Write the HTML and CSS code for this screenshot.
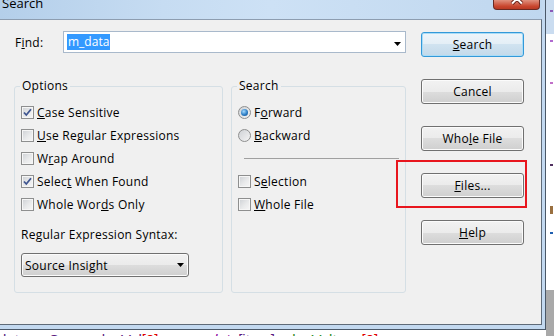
FILE: index.html
```html
<html>

<head>
  <link rel="stylesheet" href="styles.css">
</head>

<body>
  <div class="screen">
    <div class="desk">
      <div class="window">
        <div class="titlebar">
          <span class="title">Search</span>
          <span class="btn-close">
            <svg width="47" height="10" viewBox="0 0 47 10">
              <path d="M19.5 3.5L29.5 -6.5M29.5 3.5L19.5 -6.5" stroke="#6a2218" stroke-width="4" fill="none"></path>
              <path d="M19.5 3.5L29.5 -6.5M29.5 3.5L19.5 -6.5" stroke="#fff" stroke-width="2" fill="none"></path>
            </svg>
          </span>
        </div>
        <div class="client">
          <div class="main">
            <div class="find-row">
              <label class="find-label">F<u>i</u>nd:</label>
              <div class="combo">
                <span class="sel">m_data</span>
                <svg class="arrow" width="7" height="4" viewBox="0 0 7 4"><polygon points="0,0 7,0 3.5,4" fill="#000"></polygon></svg>
              </div>
            </div>
            <div class="groups">
              <fieldset class="group group-options">
                <legend>Options</legend>
                <div class="row">
                  <span class="check"><svg width="11" height="11" viewBox="0 0 11 11"><polyline points="2,5.5 4.3,8 9,2.3" fill="none" stroke="#3f5590" stroke-width="1.8"></polyline></svg></span>
                  <span><u>C</u>ase Sensitive</span>
                </div>
                <div class="row">
                  <span class="check"></span>
                  <span><u>U</u>se Regular Expressions</span>
                </div>
                <div class="row">
                  <span class="check"></span>
                  <span>W<u>r</u>ap Around</span>
                </div>
                <div class="row">
                  <span class="check"><svg width="11" height="11" viewBox="0 0 11 11"><polyline points="2,5.5 4.3,8 9,2.3" fill="none" stroke="#3f5590" stroke-width="1.8"></polyline></svg></span>
                  <span>Selec<u>t</u> When Found</span>
                </div>
                <div class="row">
                  <span class="check"></span>
                  <span>Whole Wor<u>d</u>s Only</span>
                </div>
                <div class="syntax-label">Regular Expression Syntax:</div>
                <div class="select">
                  <span>Source Insight</span>
                  <svg class="arrow" width="7" height="4" viewBox="0 0 7 4"><polygon points="0,0 7,0 3.5,4" fill="#000"></polygon></svg>
                </div>
              </fieldset>
              <fieldset class="group group-search">
                <legend>Search</legend>
                <div class="row">
                  <span class="radio"><span class="dot"></span></span>
                  <span>F<u>o</u>rward</span>
                </div>
                <div class="row">
                  <span class="radio"></span>
                  <span><u>B</u>ackward</span>
                </div>
                <div class="row">
                  <div class="separator"></div>
                </div>
                <div class="row">
                  <span class="check"></span>
                  <span>S<u>e</u>lection</span>
                </div>
                <div class="row">
                  <span class="check"></span>
                  <span><u>W</u>hole File</span>
                </div>
              </fieldset>
            </div>
          </div>
          <div class="buttons">
            <button class="btn default"><u>S</u>earch</button>
            <button class="btn">Cancel</button>
            <button class="btn">Who<u>l</u>e File</button>
            <div class="files-wrap">
              <button class="btn"><u>F</u>iles...</button>
              <div class="mark"></div>
            </div>
            <button class="btn"><u>H</u>elp</button>
          </div>
        </div>
      </div>
      <div class="editor-side">
        <span class="dash d1"></span>
        <span class="dash d2"></span>
        <span class="dash d3"></span>
        <span class="dash d4"></span>
        <span class="dash d5"></span>
        <span class="dash d6"></span>
      </div>
    </div>
    <div class="code-line"><span class="c-var">data-&gt;sComm.devVol</span><span class="c-idx">[0]</span>   =  <span class="c-mem">m_data</span><span class="c-var">[item].</span><span class="c-fld">relayVoltage</span><span class="c-idx">[0]</span>;</div>
  </div>
</body>

</html>
```

FILE: styles.css
```css
* {
  margin: 0;
  padding: 0;
  box-sizing: border-box;
}

body {
  width: 554px;
  height: 336px;
  overflow: hidden;
  background: #fff;
  font-family: "Open Sans", "Noto Sans", sans-serif;
  font-size: 12px;
  color: #000;
}

.screen {
  display: flex;
  flex-direction: column;
  height: 336px;
}

.desk {
  display: flex;
  height: 330px;
}

/* dialog window + aero frame */
.window {
  width: 546px;
  display: flex;
  flex-direction: column;
  background: #c3d9f0;
  border-right: 1px solid #4a5868;
  border-bottom: 1px solid #4a5868;
  padding: 0 3px 4px 0;
}

.titlebar {
  height: 19px;
  display: flex;
  justify-content: space-between;
  align-items: flex-start;
  background: linear-gradient(90deg, #b4cfea 0%, #c6dcf2 30%, #cde1f5 50%, #c5dbf1 80%, #bfd7ef 100%);
}

.title {
  font-size: 13px;
  line-height: 13px;
  margin: -3px 0 0 2px;
}

.btn-close {
  display: flex;
  width: 47px;
  height: 10px;
  margin-right: 2px;
  border: 1px solid #6b2a22;
  border-top: none;
  border-radius: 0 0 4px 4px;
  background: linear-gradient(#e0917e, #c9452d 70%, #b83a24);
  overflow: hidden;
}

.btn-close svg {
  margin-left: -1px;
}

.client {
  flex: 1;
  display: flex;
  gap: 15px;
  padding: 11px 17px 0 14px;
  background: #f0f0f0;
  border-top: 1px solid #8d9db0;
  border-right: 1px solid #5f6b78;
  border-bottom: 1px solid #5f6b78;
  letter-spacing: 0.25px;
}

.main {
  width: 392px;
  display: flex;
  flex-direction: column;
}

.find-row {
  display: flex;
  align-items: center;
  height: 22px;
}

.find-label {
  width: 49px;
  padding-left: 1px;
}

.combo {
  flex: 1;
  height: 22px;
  display: flex;
  align-items: flex-start;
  background: #fff;
  border: 1px solid #a9b9cb;
  padding: 2px 4px 0 3px;
}

.combo .sel {
  background: #3399ff;
  color: #fff;
  line-height: 16px;
  height: 16px;
  padding: 0 1px;
  letter-spacing: 0;
}

.combo .arrow {
  margin-left: auto;
  margin-top: 8px;
}

.groups {
  display: flex;
  gap: 8px;
  margin-top: 26px;
}

.group {
  height: 214px;
  border: 1px solid #d5dfe5;
  border-radius: 3px;
  padding: 8px 6px 0 6px;
}

.group legend {
  padding: 0 2px;
  margin-left: -1px;
  line-height: 14px;
}

.group-options {
  width: 209px;
}

.group-search {
  width: 175px;
}

.row {
  display: flex;
  align-items: center;
  gap: 3px;
  height: 23px;
  white-space: nowrap;
}

.check {
  flex: none;
  width: 13px;
  height: 13px;
  border: 1px solid #8e8f8f;
  background: linear-gradient(135deg, #cdd0d4 0%, #e9eaeb 55%, #f7f7f7 100%);
  box-shadow: inset 0 0 0 1px #f6f6f6;
}

.check svg {
  display: block;
}

.radio {
  flex: none;
  width: 13px;
  height: 13px;
  border: 1px solid #8e8f8f;
  border-radius: 50%;
  background: linear-gradient(135deg, #cfd2d6, #f4f4f4);
  display: flex;
  align-items: center;
  justify-content: center;
}

.radio .dot {
  width: 7px;
  height: 7px;
  border-radius: 50%;
  background: radial-gradient(circle at 40% 35%, #a6dcff 0%, #2b7cc4 55%, #124d8a 100%);
}

.separator {
  width: 155px;
  height: 1px;
  margin-left: 6px;
  background: #a0a0a0;
}

.syntax-label {
  margin-top: 11px;
  line-height: 16px;
}

.select {
  margin-top: 10px;
  width: 168px;
  height: 24px;
  display: flex;
  align-items: center;
  justify-content: space-between;
  padding: 0 4px 0 3px;
  border: 1px solid #707070;
  border-radius: 3px;
  background: linear-gradient(#f2f2f2 0%, #ebebeb 50%, #dddddd 50%, #cfcfcf 100%);
  box-shadow: inset 0 0 0 1px #fbfbfb;
}

.buttons {
  width: 103px;
  display: flex;
  flex-direction: column;
  gap: 22px;
  padding-top: 1px;
}

.btn {
  width: 103px;
  height: 25px;
  border: 1px solid #707070;
  border-radius: 3px;
  background: linear-gradient(#f2f2f2 0%, #ebebeb 50%, #dddddd 50%, #cfcfcf 100%);
  box-shadow: inset 0 0 0 1px #fbfbfb;
  font-family: inherit;
  font-size: 12px;
  letter-spacing: inherit;
  color: #000;
}

.btn.default {
  border-color: #3399d9;
  background: linear-gradient(#eef5fa 0%, #e3eef6 50%, #d0e3f0 50%, #c3d9ea 100%);
  box-shadow: inset 0 0 0 1px #a9dcf7;
}

.files-wrap {
  position: relative;
  height: 25px;
}

/* red annotation frame */
.mark {
  position: absolute;
  left: -25px;
  top: -13px;
  width: 131px;
  height: 48px;
  border: 2px solid #e8161e;
}

.editor-side {
  flex: 1;
  display: flex;
  flex-direction: column;
  align-items: flex-end;
  background: linear-gradient(#cadcf0 0 34px, #fff 34px 290px, #a9a9a9 290px);
}

.dash {
  width: 3px;
  height: 2px;
  margin-right: 1px;
}

.d1 { margin-top: 10px; background: #8a5ab8; }
.d2 { margin-top: 28px; background: #b06ad0; }
.d3 { margin-top: 40px; background: #c070c8; }
.d4 { margin-top: 80px; background: #503060; }
.d5 { margin-top: 40px; background: #9a7040; height: 8px; }
.d6 { margin-top: 18px; background: #2060b0; }

.code-line {
  height: 6px;
  overflow: hidden;
  white-space: pre;
  font-family: "Liberation Sans", sans-serif;
  font-size: 15px;
  line-height: 13px;
  padding-top: 3px;
  color: #222;
  background: linear-gradient(90deg, #fff 0 546px, #a9a9a9 546px);
}

.code-line .c-var:first-child {
  margin-left: -2px;
}

.c-var {
  color: #5a1a80;
}

.c-idx {
  color: #e00000;
}

.c-mem {
  color: #8a00a0;
  font-style: italic;
}

.c-fld {
  color: #2a8a20;
}
```
